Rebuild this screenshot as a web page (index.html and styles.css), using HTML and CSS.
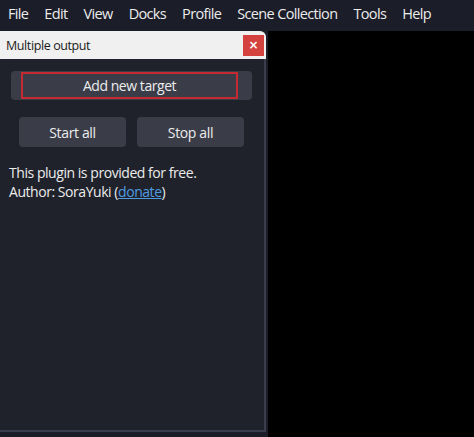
FILE: index.html
```html
<!DOCTYPE html>
<html>
<head>
<meta charset="utf-8">
<link rel="stylesheet" href="styles.css">
</head>
<body>
<div class="menubar">
  <span class="mi">File</span>
  <span class="mi">Edit</span>
  <span class="mi">View</span>
  <span class="mi">Docks</span>
  <span class="mi">Profile</span>
  <span class="mi">Scene Collection</span>
  <span class="mi">Tools</span>
  <span class="mi">Help</span>
</div>
<div class="main">
  <div class="dock">
    <div class="titlebar">
      <span class="title">Multiple output</span>
      <span class="close">×</span>
    </div>
    <div class="dockbody">
      <div class="addbtn"><span class="addinner">Add new target</span></div>
      <div class="row">
        <div class="btn">Start all</div>
        <div class="btn">Stop all</div>
      </div>
      <div class="info">
        <div>This plugin is provided for free.</div>
        <div>Author: SoraYuki (<a class="link" href="#">donate</a>)</div>
      </div>
    </div>
  </div>
  <div class="preview"></div>
</div>
</body>
</html>
```
FILE: styles.css
```css
html, body {
  margin: 0;
  padding: 0;
  width: 474px;
  height: 437px;
  overflow: hidden;
  background: #1b1d28;
  font-family: "Open Sans", "Noto Sans", sans-serif;
  color: #e6e6e6;
}
.menubar {
  height: 31px;
  display: flex;
  align-items: center;
  padding-left: 8px;
  gap: 16px;
  font-size: 14.5px;
  letter-spacing: -0.65px;
  color: #ececec;
  box-sizing: border-box;
  padding-bottom: 4px;
}
.main {
  display: flex;
  height: 406px;
}
.dock {
  width: 266px;
  display: flex;
  flex-direction: column;
  height: 401px;
}
.titlebar {
  height: 28px;
  background: #f0f0f0;
  border-top-right-radius: 6px;
  display: flex;
  align-items: center;
  justify-content: space-between;
  padding-left: 6px;
  padding-right: 2px;
  box-sizing: border-box;
}
.title {
  color: #1a1a1a;
  font-size: 12.5px;
  letter-spacing: -0.4px;
}
.close {
  width: 21px;
  height: 21px;
  background: #d4423f;
  color: #fff;
  font-family: "DejaVu Sans", sans-serif;
  font-size: 12px;
  font-weight: bold;
  display: flex;
  align-items: center;
  justify-content: center;
  line-height: 1;
}
.dockbody {
  flex: 1;
  background: #1f222b;
  border-right: 2px solid #3a3d4b;
  border-bottom: 2px solid #3a3d4b;
  padding: 12px 12px 0 11px;
  box-sizing: border-box;
}
.addbtn {
  height: 29px;
  background: #3a3d48;
  border-radius: 4px;
  display: flex;
  padding: 1px 14px 1px 10px;
  box-sizing: border-box;
}
.addinner {
  flex: 1;
  border: 2px solid #c42a30;
  display: flex;
  align-items: center;
  justify-content: center;
  font-size: 14px;
  letter-spacing: -0.45px;
  color: #ececec;
}
.row {
  display: flex;
  gap: 11px;
  margin-top: 17px;
  padding-left: 8px;
}
.btn {
  width: 107px;
  height: 30px;
  background: #3a3d48;
  border-radius: 4px;
  display: flex;
  align-items: center;
  justify-content: center;
  font-size: 14px;
  letter-spacing: -0.35px;
  color: #ececec;
}
.info {
  margin-top: 16px;
  margin-left: -2px;
  font-size: 14px;
  letter-spacing: -0.45px;
  line-height: 19px;
  color: #ececec;
}
.link {
  color: #4f9be0;
  text-decoration: underline;
}
.preview {
  flex: 1;
  margin-left: 2px;
  background: #000;
}
```
